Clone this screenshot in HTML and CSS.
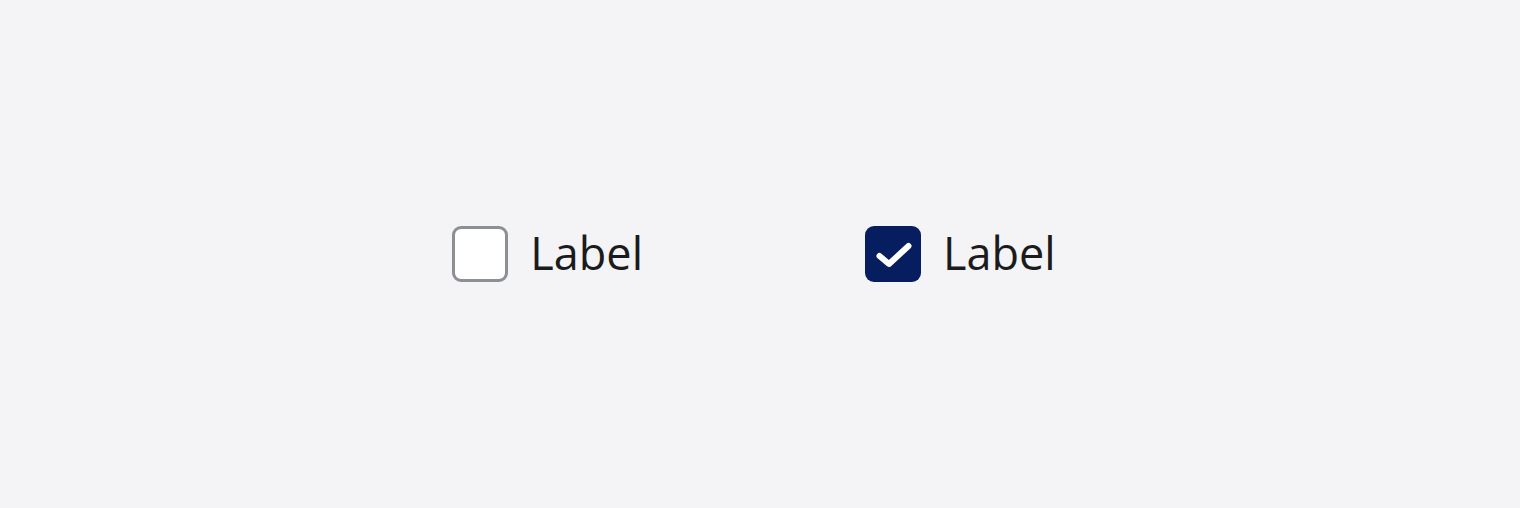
FILE: index.html
```html
<!DOCTYPE html>
<html>
<head>
<meta charset="utf-8">
<link rel="stylesheet" href="styles.css">
</head>
<body>
<main class="stage">
  <label class="item">
    <span class="box"></span>
    <span class="text">Label</span>
  </label>
  <label class="item">
    <span class="box checked">
      <svg viewBox="0 0 56 56" width="56" height="56"><polyline points="14.5,30 24,38 43.5,20" fill="none" stroke="#fff" stroke-width="6" stroke-linecap="round" stroke-linejoin="round"/></svg>
    </span>
    <span class="text">Label</span>
  </label>
</main>
</body>
</html>
```
FILE: styles.css
```css
html, body {
  margin: 0;
  padding: 0;
  background: #f4f4f6;
}
.stage {
  box-sizing: border-box;
  height: 508px;
  padding-right: 12px;
  display: flex;
  align-items: center;
  justify-content: center;
  gap: 222px;
}
.item {
  display: flex;
  align-items: center;
  gap: 22px;
}
.box {
  box-sizing: border-box;
  width: 56px;
  height: 56px;
  border: 3px solid #8c8f93;
  border-radius: 9px;
  background: #ffffff;
  display: block;
}
.box.checked {
  border: none;
  background: #061e60;
}
.box svg { display: block; }
.text {
  font-family: "Open Sans", sans-serif;
  font-size: 45px;
  color: #1b1b1d;
  line-height: 1;
  padding-bottom: 3px;
}
```
